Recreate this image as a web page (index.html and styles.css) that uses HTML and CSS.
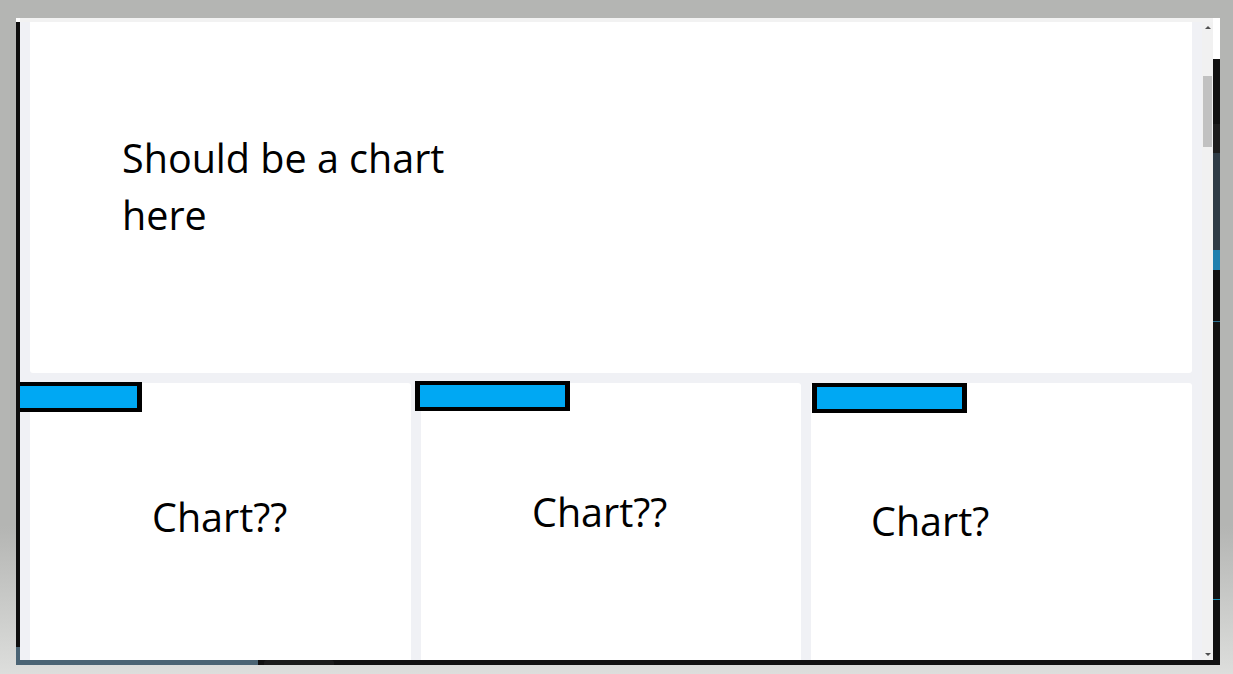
FILE: index.html
```html
<!DOCTYPE html>
<html lang="en">
<head>
    <meta charset="UTF-8">
    <meta name="viewport" content="width=device-width, initial-scale=1.0">
    <title>Dashboard</title>
    <link rel="stylesheet" href="styles.css">
</head>
<body>
    <div class="window">
        <div class="window-body">
            <div class="edge-left"></div>

            <div class="browser">
                <div class="tabstrip"></div>
                <div class="viewport">
                    <div class="page">
                        <!-- Main chart placeholder -->
                        <section class="card card-main">
                            <p class="chart-note">Should be a chart here</p>
                        </section>

                        <!-- Small charts -->
                        <div class="card-row">
                            <section class="card card-small card-first">
                                <span class="card-label"></span>
                                <p class="chart-note">Chart??</p>
                            </section>
                            <section class="card card-small card-second">
                                <span class="card-label"></span>
                                <p class="chart-note">Chart??</p>
                            </section>
                            <section class="card card-small card-third">
                                <span class="card-label"></span>
                                <p class="chart-note">Chart?</p>
                            </section>
                        </div>
                    </div>

                    <div class="scrollbar">
                        <span class="scroll-arrow up"></span>
                        <span class="scroll-thumb"></span>
                        <span class="scroll-arrow down"></span>
                    </div>
                </div>
            </div>

            <div class="edge-right"></div>
        </div>

        <div class="taskbar">
            <div class="taskbar-start"></div>
            <div class="taskbar-rest">
                <span class="taskbar-item"></span>
            </div>
        </div>
    </div>
</body>
</html>
```

FILE: styles.css
```css
* {
    box-sizing: border-box;
}

html, body {
    margin: 0;
    height: 100%;
}

body {
    padding: 18px 0 0 16px;
    background: linear-gradient(to bottom, #b4b5b3 0%, #b4b5b3 78%, #dddedc 100%);
    font-family: 'Open Sans', 'Liberation Sans', sans-serif;
    color: #000;
    overflow: hidden;
}

.window {
    width: 1204px;
    height: 647px;
    display: flex;
    flex-direction: column;
}

.window-body {
    display: flex;
    height: 642px;
}

/* Editor peeking out behind the browser */
.edge-left {
    width: 4px;
    background: linear-gradient(to bottom, #ffffff 0 4px, #0e0e0e 4px 629px, #4b6474 629px);
}

.edge-right {
    width: 7px;
    background: linear-gradient(to bottom,
        #ffffff 0 41px,
        #111111 41px 106px,
        #1d1d1d 106px 135px,
        #2f3c46 135px 232px,
        #1f80ae 232px 252px,
        #111111 252px 303px,
        #2a6f8f 303px 304px,
        #111111 304px 581px,
        #1a8db4 581px 582px,
        #111111 582px);
}

.browser {
    width: 1193px;
    display: flex;
    flex-direction: column;
}

.tabstrip {
    height: 4px;
    background: #f2f2f2;
}

.viewport {
    flex: 1;
    display: flex;
    min-height: 0;
}

.page {
    width: 1182px;
    padding: 0 10px;
    display: flex;
    flex-direction: column;
    gap: 10px;
    background: #f0f1f5;
    overflow: hidden;
}

.card {
    background: #ffffff;
    border-radius: 3px;
}

.card-main {
    flex-shrink: 0;
    height: 351px;
    border-radius: 0 0 3px 3px;
    padding: 108px 0 0 92px;
}

.card-main .chart-note {
    max-width: 360px;
}

.chart-note {
    margin: 0;
    font-size: 39.5px;
    line-height: 57px;
}

.card-row {
    flex-shrink: 0;
    height: 400px;
    display: grid;
    grid-template-columns: 381px 380px 1fr;
    gap: 10px;
}

.card-small {
    position: relative;
}

.card-first {
    padding: 106px 0 0 122px;
}

.card-second {
    padding: 101px 0 0 111px;
}

.card-third {
    padding: 110px 0 0 60px;
}

/* Blue tag sitting over the card corner */
.card-label {
    position: absolute;
    width: 155px;
    height: 30px;
    border: 4px solid #000;
    border-width: 4px 5px;
    background: #00a8f3;
}

.card-first .card-label {
    left: -43px;
    top: -1px;
}

.card-second .card-label {
    left: -6px;
    top: -2px;
}

.card-third .card-label {
    left: 1px;
    top: 0;
}

.scrollbar {
    width: 11px;
    position: relative;
    background: #f1f1f1;
}

.scroll-thumb {
    position: absolute;
    left: 1px;
    top: 54px;
    width: 9px;
    height: 71px;
    background: #c1c1c1;
}

.scroll-arrow {
    position: absolute;
    left: 3px;
    width: 0;
    height: 0;
    border-left: 3px solid transparent;
    border-right: 3px solid transparent;
}

.scroll-arrow.up {
    top: 4px;
    border-bottom: 3px solid #505050;
}

.scroll-arrow.down {
    bottom: 4px;
    border-top: 3px solid #505050;
}

.taskbar {
    height: 5px;
    display: flex;
}

.taskbar-start {
    width: 242px;
    background: #4b6474;
}

.taskbar-rest {
    flex: 1;
    background: #111111;
    padding-left: 6px;
}

.taskbar-item {
    display: block;
    width: 70px;
    height: 5px;
    border-radius: 3px 3px 0 0;
    background: #1c1c1c;
}
```
